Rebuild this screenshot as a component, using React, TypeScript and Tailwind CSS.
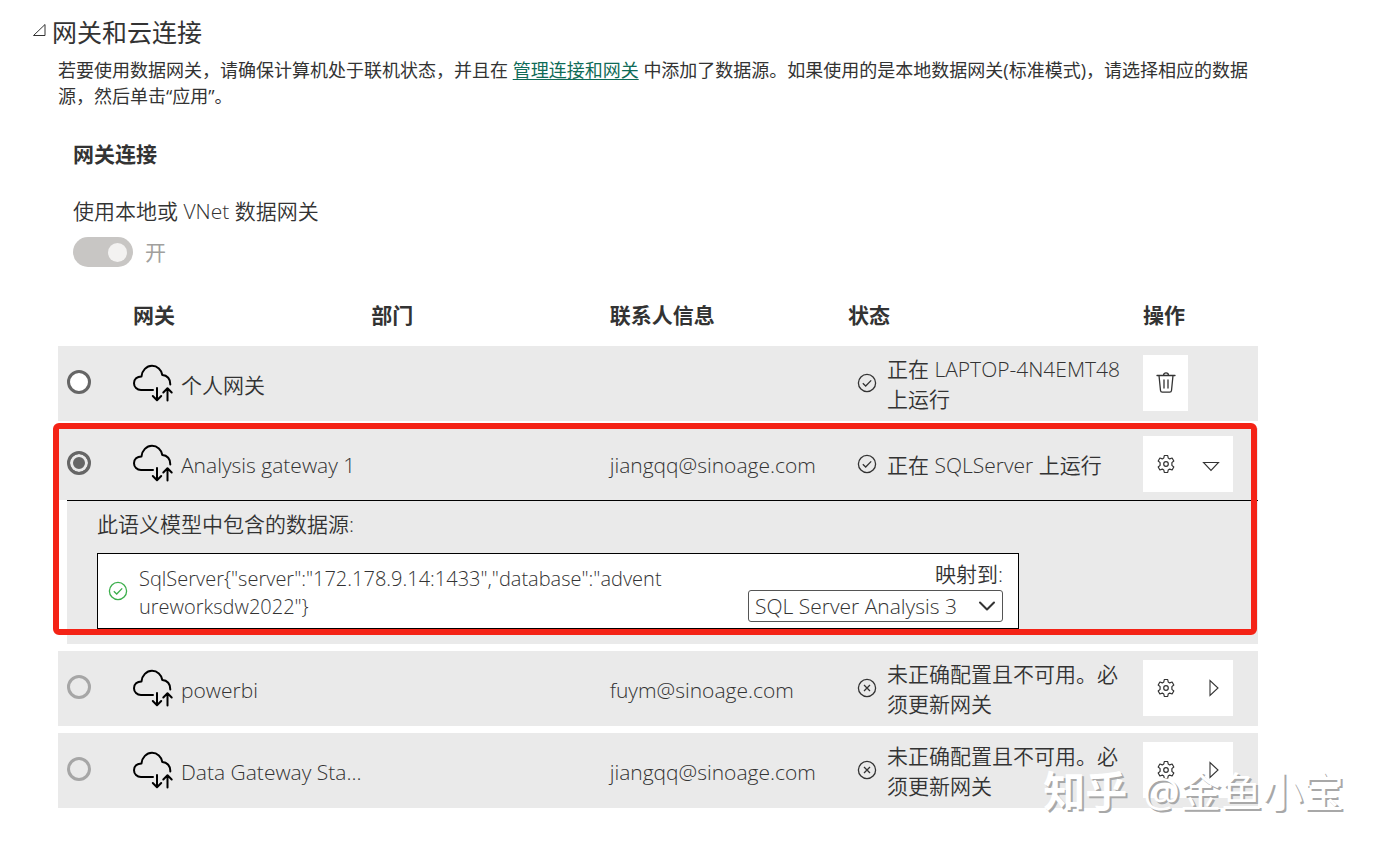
import { useState } from "react";
import { ChevronDown } from "lucide-react";

type Gateway = {
  id: string;
  name: string;
  contact: string;
  status: string;
  ok: boolean;
  personal?: boolean;
  disabled?: boolean;
};

const gateways: Gateway[] = [
  { id: "personal", name: "个人网关", contact: "", status: "正在 LAPTOP-4N4EMT48 上运行", ok: true, personal: true },
  { id: "analysis", name: "Analysis gateway 1", contact: "jiangqq@sinoage.com", status: "正在 SQLServer 上运行", ok: true },
  { id: "powerbi", name: "powerbi", contact: "fuym@sinoage.com", status: "未正确配置且不可用。必须更新网关", ok: false, disabled: true },
  { id: "standard", name: "Data Gateway Sta...", contact: "jiangqq@sinoage.com", status: "未正确配置且不可用。必须更新网关", ok: false, disabled: true },
];

function CloudIcon() {
  return (
    <svg viewBox="1 0 42 40" className="h-10 w-[42px] shrink-0" fill="none" stroke="#000" strokeWidth="2" strokeLinecap="round" strokeLinejoin="round">
      <path d="M21 27H9C5 27 2 24 2 20.200c0-3.900 3-6.800 7.500-6.800C10 7.500 14.500 2.800 20 2.800c5.300 0 9.500 3.900 10.300 9.200 4.800.2 8.300 4 8 9.500" />
      <path d="M25 25v12M20.800 33l4.200 4.200 4.200-4.200M35.500 37.500v-12M31.300 29.500l4.200-4.200 4.200 4.200" />
    </svg>
  );
}

function StatusIcon({ ok, className }: { ok: boolean; className: string }) {
  return (
    <svg viewBox="0 0 20 20" className={className} fill="none" stroke="currentColor" strokeWidth="1.3">
      <circle cx="10" cy="10" r="8.600" />
      {ok ? <path d="M5.800 10.200l2.900 2.800 5.500-5.600" /> : <path d="M7 7l6 6M13 7l-6 6" />}
    </svg>
  );
}

function GearIcon() {
  return (
    <svg viewBox="0 0 20 20" className="size-5" fill="none" stroke="currentColor" strokeWidth="1.2" strokeLinejoin="round">
      <path d="M8.300 1.500h3.400l.5 2.500 1.500.9 2.400-.9 1.700 3-1.900 1.600v2.800l1.900 1.600-1.700 3-2.400-.9-1.500.9-.5 2.500H8.300L7.800 16l-1.500-.9-2.400.9-1.700-3 1.900-1.600V8.600L2.200 7l1.700-3 2.400.9L7.800 4z" />
      <circle cx="10" cy="10" r="2.300" />
    </svg>
  );
}

function TrashIcon() {
  return (
    <svg viewBox="0 0 20 24" className="h-6 w-5" fill="none" stroke="currentColor" strokeWidth="1.3" strokeLinecap="round">
      <path d="M1 4.500h18M7.500 4.500c0-3.500 5-3.500 5 0M3 4.500l1.500 15c.1 1 .8 1.700 1.800 1.700h7.400c1 0 1.700-.7 1.800-1.700l1.500-15M8 9v8M12 9v8" />
    </svg>
  );
}

function Actions({ gateway, open, onToggle }: { gateway: Gateway; open: boolean; onToggle: () => void }) {
  if (gateway.personal) {
    return (
      <button type="button" aria-label="删除" className="flex h-14 w-[45px] items-center justify-center bg-white">
        <TrashIcon />
      </button>
    );
  }
  return (
    <div className="flex h-14 w-[90px] bg-white">
      <button type="button" aria-label="设置" className="flex flex-1 items-center justify-center">
        <GearIcon />
      </button>
      <button type="button" aria-label="展开" aria-expanded={open} onClick={onToggle} className="flex flex-1 items-center justify-center">
        <svg viewBox="0 0 18 18" className="size-[18px]" fill="none" stroke="currentColor" strokeWidth="1.1">
          {open ? <path d="M1.500 7.500h15L9 15.500z" /> : <path d="M8 1.500v15l8-7.500z" />}
        </svg>
      </button>
    </div>
  );
}

function DataSources() {
  return (
    <div className="border-t border-black bg-[#eaeaea] px-[30px] pt-[7px] pb-[15px]">
      <p className="leading-8">此语义模型中包含的数据源:</p>
      <div className="mt-[13px] flex max-w-[922px] items-center justify-between border border-black bg-white pr-[15px] pl-[10px]">
        <div className="flex items-center gap-[11px]">
          <StatusIcon ok className="size-5 shrink-0 text-[#3cae4c]" />
          <p className="w-[532px] pt-1 text-xl leading-7 break-all">
            SqlServer{'{"server":"172.178.9.14:1433","database":"adventureworksdw2022"}'}
          </p>
        </div>
        <div className="flex flex-col items-end pt-1 pb-[6px]">
          <label htmlFor="mapping" className="leading-8">映射到:</label>
          <div className="relative">
            <select id="mapping" className="block h-8 w-[255px] appearance-none rounded-[3px] border border-[#555] bg-white pl-[6px]">
              <option>SQL Server Analysis 3</option>
            </select>
            <ChevronDown className="pointer-events-none absolute top-[2px] right-[2px] size-7" strokeWidth={1.75} />
          </div>
        </div>
      </div>
    </div>
  );
}

export default function App() {
  const [selected, setSelected] = useState("analysis");
  const [expanded, setExpanded] = useState("analysis");

  return (
    <main className="relative min-h-screen bg-white pt-[15px] pr-[121px] pb-10 pl-8 font-['Open_Sans','Noto_Sans_CJK_SC',sans-serif] text-[21px] text-[#333]">
      <h1 className="flex items-center gap-1 text-[25px] leading-[34px]">
        <svg viewBox="0 0 16 16" className="size-4" fill="none" stroke="currentColor" strokeWidth="1">
          <path d="M1.500 11.500h11.500V.500z" />
        </svg>
        网关和云连接
      </h1>
      <div className="pl-[26px]">
        <p className="mt-2 text-lg leading-[26px]">
          若要使用数据网关，请确保计算机处于联机状态，并且在{" "}
          <a href="#" className="text-[#0f6b57] underline underline-offset-2">管理连接和网关</a>{" "}
          中添加了数据源。如果使用的是本地数据网关(标准模式)，请选择相应的数据源，然后单击“应用”。
        </p>
        <div className="px-[15px]">
          <h2 className="mt-[29px] leading-8 font-bold">网关连接</h2>
          <p id="useGateway" className="mt-[25px] leading-8 font-[350]">使用本地或 VNet 数据网关</p>
          <div className="mt-[10px] flex items-center gap-3">
            <button type="button" role="switch" aria-checked="true" aria-labelledby="useGateway" disabled className="flex h-[30px] w-[60px] items-center justify-end rounded-full bg-[#c8c6c4] pr-[6px]">
              <span className="size-[19px] rounded-full bg-[#f3f2f1]" />
            </button>
            <span className="leading-[30px] text-[#a19f9d]">开</span>
          </div>
        </div>

        <table className="mt-8 w-full table-fixed border-collapse text-left font-[350]">
          <colgroup>
            <col className="w-[75px]" />
            <col />
            <col />
            <col />
            <col className="w-[295px]" />
            <col className="w-[115px]" />
          </colgroup>
          <thead>
            <tr className="h-[47px] align-top leading-8">
              <td />
              <th className="font-bold">网关</th>
              <th className="font-bold">部门</th>
              <th className="font-bold">联系人信息</th>
              <th className="font-bold">状态</th>
              <th className="font-bold">操作</th>
            </tr>
          </thead>
          {gateways.map((g) => {
            const open = expanded === g.id;
            return (
              <tbody key={g.id} className="relative">
                <tr className={open ? "h-[72px] bg-[#eaeaea]" : "h-[75px] bg-[#eaeaea]"}>
                  <td className="pb-[3px] pl-[9px]">
                    <input
                      type="radio"
                      name="gateway"
                      aria-label={g.name}
                      checked={selected === g.id}
                      disabled={g.disabled}
                      onChange={() => setSelected(g.id)}
                      className="block size-6 appearance-none rounded-full border-[3px] border-[#666] bg-white checked:bg-[#666] checked:shadow-[inset_0_0_0_3px_#eaeaea] disabled:border-[#a6a6a6] disabled:bg-transparent"
                    />
                  </td>
                  <td className="pb-[2px]">
                    <div className="flex items-center gap-[6px] whitespace-nowrap">
                      <CloudIcon />
                      <span className="pt-[6px]">{g.name}</span>
                    </div>
                  </td>
                  <td />
                  <td className="pt-1">{g.contact}</td>
                  <td className="pb-px pl-[9px]">
                    <div className="flex items-center gap-[10px] pr-4">
                      <StatusIcon ok={g.ok} className="size-5 shrink-0" />
                      <span className="pt-[2px] leading-[30px]">{g.status}</span>
                    </div>
                  </td>
                  <td className="pb-px">
                    <Actions gateway={g} open={open} onToggle={() => setExpanded(open ? "" : g.id)} />
                  </td>
                </tr>
                {open && (
                  <tr>
                    <td colSpan={6} className="pl-[9px]">
                      <DataSources />
                      <div className="pointer-events-none absolute -top-[5px] right-px bottom-4 -left-[5px] rounded-md border-[6px] border-[#f42316]" />
                    </td>
                  </tr>
                )}
                <tr className="h-[7px]">
                  <td colSpan={6} />
                </tr>
              </tbody>
            );
          })}
        </table>
      </div>

      <div className="pointer-events-none absolute right-[35px] bottom-[34px] flex items-center gap-4 text-[41px] leading-[60px] text-white [text-shadow:2px_2px_0_#a8a8a8]">
        <span className="text-[42px] font-bold">知乎</span>
        <span>@金鱼小宝</span>
      </div>
    </main>
  );
}
